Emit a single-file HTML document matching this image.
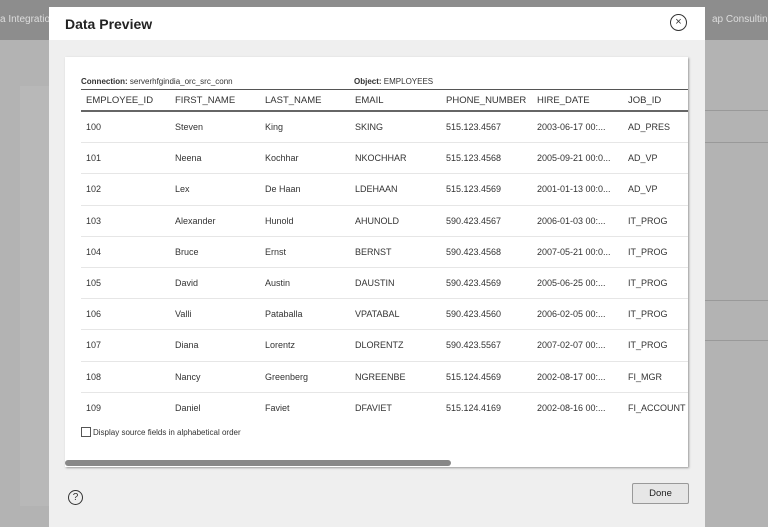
<!DOCTYPE html>
<html><head><style>
body{margin:0;width:768px;height:515px;overflow:hidden;background:#b3b3b3;font-family:"Liberation Sans",sans-serif;position:relative}
.top{position:absolute;left:0;top:0;width:768px;height:40px;background:#8d8d8d}
.t{position:absolute;font-size:10px;color:#ddd;white-space:nowrap}
.modal{position:absolute;left:49px;top:7px;width:656px;height:520px;background:#efefef}
.mh{height:33px;background:#fff;position:relative}
.mh b{position:absolute;left:16px;top:9px;font-size:14px;color:#222}
.close{position:absolute;left:621px;top:7px;width:15px;height:15px;border:1.3px solid #333;border-radius:50%;font-size:11px;line-height:14px;text-align:center;color:#333}
.panel{position:absolute;left:16px;top:50px;width:623px;height:410px;background:#fff;box-shadow:1px 1px 2px #999;overflow:hidden}
.conn{position:absolute;left:16px;top:20px;font-size:8px;color:#333}
.obj{position:absolute;left:289px;top:20px;font-size:8px;color:#333}
.l1{position:absolute;left:16px;top:32px;width:620px;height:1px;background:#555}
table{position:absolute;left:16px;top:34px;border-collapse:collapse;width:620px;font-size:9px;color:#333}
th{font-weight:normal;text-align:left;height:19px;border-bottom:2px solid #666;padding:0 0 0 5px;font-size:9.5px}
td{height:30.2px;border-bottom:1px solid #e6e6e6;padding:0 0 0 5px;white-space:nowrap}
.cb{position:absolute;left:16px;top:370px;font-size:8px;color:#333}
.cb span{display:inline-block;width:8px;height:8px;border:1px solid #555;vertical-align:-2px;margin-right:2px}
.sb{position:absolute;left:0;top:403px;width:386px;height:6px;background:#888;border-radius:3px}
.help{position:absolute;left:19px;top:483px;width:13px;height:13px;border:1.3px solid #333;border-radius:50%;font-size:10px;line-height:13px;text-align:center;color:#333}
.done{position:absolute;left:583px;top:476px;width:55px;height:19px;border:1px solid #999;background:#e6e6e6;font-size:9.5px;text-align:center;line-height:19px;color:#222;border-radius:2px}
</style></head><body>
<div class="top"></div>
<div class="t" style="left:0;top:14px">a Integratio</div>
<div class="t" style="left:712px;top:14px">ap Consulting</div>
<div style="position:absolute;left:20px;top:86px;width:29px;height:420px;background:#b8b8b8"></div>
<div style="position:absolute;left:705px;top:110px;width:63px;height:1px;background:#999"></div>
<div style="position:absolute;left:705px;top:142px;width:63px;height:1px;background:#999"></div>
<div style="position:absolute;left:705px;top:300px;width:63px;height:1px;background:#999"></div>
<div style="position:absolute;left:705px;top:340px;width:63px;height:1px;background:#999"></div>
<div class="modal">
<div class="mh"><b>Data Preview</b><div class="close">×</div></div>
<div class="panel">
<div class="conn"><b>Connection:</b> serverhfgindia_orc_src_conn</div>
<div class="obj"><b>Object:</b> EMPLOYEES</div>
<div class="l1"></div>
<table>
<tr><th style="width:84px">EMPLOYEE_ID</th><th style="width:85px">FIRST_NAME</th><th style="width:85px">LAST_NAME</th><th style="width:86px">EMAIL</th><th style="width:86px">PHONE_NUMBER</th><th style="width:86px">HIRE_DATE</th><th>JOB_ID</th></tr>
<tr><td>100</td><td>Steven</td><td>King</td><td>SKING</td><td>515.123.4567</td><td>2003-06-17 00:...</td><td>AD_PRES</td></tr>
<tr><td>101</td><td>Neena</td><td>Kochhar</td><td>NKOCHHAR</td><td>515.123.4568</td><td>2005-09-21 00:0...</td><td>AD_VP</td></tr>
<tr><td>102</td><td>Lex</td><td>De Haan</td><td>LDEHAAN</td><td>515.123.4569</td><td>2001-01-13 00:0...</td><td>AD_VP</td></tr>
<tr><td>103</td><td>Alexander</td><td>Hunold</td><td>AHUNOLD</td><td>590.423.4567</td><td>2006-01-03 00:...</td><td>IT_PROG</td></tr>
<tr><td>104</td><td>Bruce</td><td>Ernst</td><td>BERNST</td><td>590.423.4568</td><td>2007-05-21 00:0...</td><td>IT_PROG</td></tr>
<tr><td>105</td><td>David</td><td>Austin</td><td>DAUSTIN</td><td>590.423.4569</td><td>2005-06-25 00:...</td><td>IT_PROG</td></tr>
<tr><td>106</td><td>Valli</td><td>Pataballa</td><td>VPATABAL</td><td>590.423.4560</td><td>2006-02-05 00:...</td><td>IT_PROG</td></tr>
<tr><td>107</td><td>Diana</td><td>Lorentz</td><td>DLORENTZ</td><td>590.423.5567</td><td>2007-02-07 00:...</td><td>IT_PROG</td></tr>
<tr><td>108</td><td>Nancy</td><td>Greenberg</td><td>NGREENBE</td><td>515.124.4569</td><td>2002-08-17 00:...</td><td>FI_MGR</td></tr>
<tr><td style="border:0">109</td><td style="border:0">Daniel</td><td style="border:0">Faviet</td><td style="border:0">DFAVIET</td><td style="border:0">515.124.4169</td><td style="border:0">2002-08-16 00:...</td><td style="border:0">FI_ACCOUNT</td></tr>
</table>
<div class="cb"><span></span>Display source fields in alphabetical order</div>
<div class="sb"></div>
</div>
<div class="help">?</div>
<div class="done">Done</div>
</div>
</body></html>
